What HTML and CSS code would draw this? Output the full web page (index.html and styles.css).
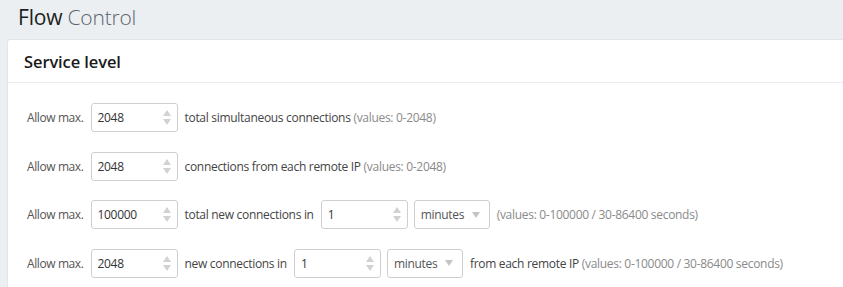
FILE: index.html
```html
<!DOCTYPE html>
<html lang="en">
<head>
	<meta charset="UTF-8">
	<title>Flow Control</title>
	<link rel="stylesheet" href="styles.css">
</head>
<body>
	<div class="page">
		<h1 class="page_title">Flow <span>Control</span></h1>
		<div class="card">
			<div class="card_head">
				<h2>Service level</h2>
			</div>
			<div class="card_body">
				<!-- row 1 -->
				<div class="row">
					<span class="label">Allow max.</span>
					<span class="field"><span class="val">2048</span><span class="spin"><i class="up"></i><i class="down"></i></span></span>
					<span class="text">total simultaneous connections <em>(values: 0-2048)</em></span>
				</div>
				<!-- row 2 -->
				<div class="row">
					<span class="label">Allow max.</span>
					<span class="field"><span class="val">2048</span><span class="spin"><i class="up"></i><i class="down"></i></span></span>
					<span class="text">connections from each remote IP <em>(values: 0-2048)</em></span>
				</div>
				<!-- row 3 -->
				<div class="row">
					<span class="label">Allow max.</span>
					<span class="field"><span class="val">100000</span><span class="spin"><i class="up"></i><i class="down"></i></span></span>
					<span class="text">total new connections in</span>
					<span class="field"><span class="val">1</span><span class="spin"><i class="up"></i><i class="down"></i></span></span>
					<span class="select">minutes<i class="caret"></i></span>
					<span class="text"><em>(values: 0-100000 / 30-86400 seconds)</em></span>
				</div>
				<!-- row 4 -->
				<div class="row">
					<span class="label">Allow max.</span>
					<span class="field"><span class="val">2048</span><span class="spin"><i class="up"></i><i class="down"></i></span></span>
					<span class="text">new connections in</span>
					<span class="field"><span class="val">1</span><span class="spin"><i class="up"></i><i class="down"></i></span></span>
					<span class="select">minutes<i class="caret"></i></span>
					<span class="text">from each remote IP <em>(values: 0-100000 / 30-86400 seconds)</em></span>
				</div>
			</div>
		</div>
	</div>
</body>
</html>
```

FILE: styles.css
```css
* {
	padding: 0;
	margin: 0;
	box-sizing: border-box;
}
body {
	background-color: #eceff1;
	font-family: "Open Sans", "Noto Sans", sans-serif;
	color: #444;
	overflow: hidden;
}
.page {
	padding: 4px 0 0 7px;
}
/* title */
.page_title {
	font-size: 21px;
	font-weight: 500;
	color: #1c1f22;
	line-height: 27px;
	padding-left: 11px;
	letter-spacing: -0.2px;
}
.page_title span {
	font-weight: 300;
	color: #5b6570;
}
/* card */
.card {
	margin-top: 8px;
	margin-right: -20px;
	background-color: #fff;
	border: 1px solid #e1e5e8;
	border-radius: 3px;
}
.card_head {
	height: 43px;
	border-bottom: 1px solid #e9ebed;
	padding: 0 16px;
	display: flex;
	align-items: center;
}
.card_head h2 {
	font-size: 16.5px;
	font-weight: 600;
	color: #1a1a1a;
	letter-spacing: -0.1px;
}
.card_body {
	padding: 20px 19px 10px;
	display: flex;
	flex-direction: column;
	gap: 19.5px;
}
/* rows */
.row {
	display: flex;
	align-items: center;
	gap: 7px;
	height: 29px;
	font-size: 12px;
	letter-spacing: -0.3px;
}
.label {
	color: #555;
	letter-spacing: -0.4px;
}
.text {
	color: #444;
	white-space: nowrap;
}
.text em {
	font-style: normal;
	color: #8a8a8a;
}
.field,
.select {
	height: 29px;
	border: 1px solid #cfcfcf;
	border-radius: 3px;
	display: flex;
	align-items: center;
	color: #333;
	background-color: #fff;
}
.field {
	width: 87px;
	padding: 0 6px;
	justify-content: space-between;
}
.field + .select {
	margin-left: -1px;
}
.select {
	width: 76px;
	padding: 0 9px 0 6px;
	justify-content: space-between;
	color: #555;
}
/* spinner arrows */
.spin {
	display: flex;
	flex-direction: column;
	gap: 3px;
}
.spin i {
	display: block;
	width: 0;
	height: 0;
	border-left: 4px solid transparent;
	border-right: 4px solid transparent;
}
.spin .up {
	border-bottom: 6px solid #d2d2d2;
}
.spin .down {
	border-top: 6px solid #d2d2d2;
}
.caret {
	display: block;
	width: 0;
	height: 0;
	border-left: 4px solid transparent;
	border-right: 4px solid transparent;
	border-top: 6px solid #c4c4c4;
}
```
